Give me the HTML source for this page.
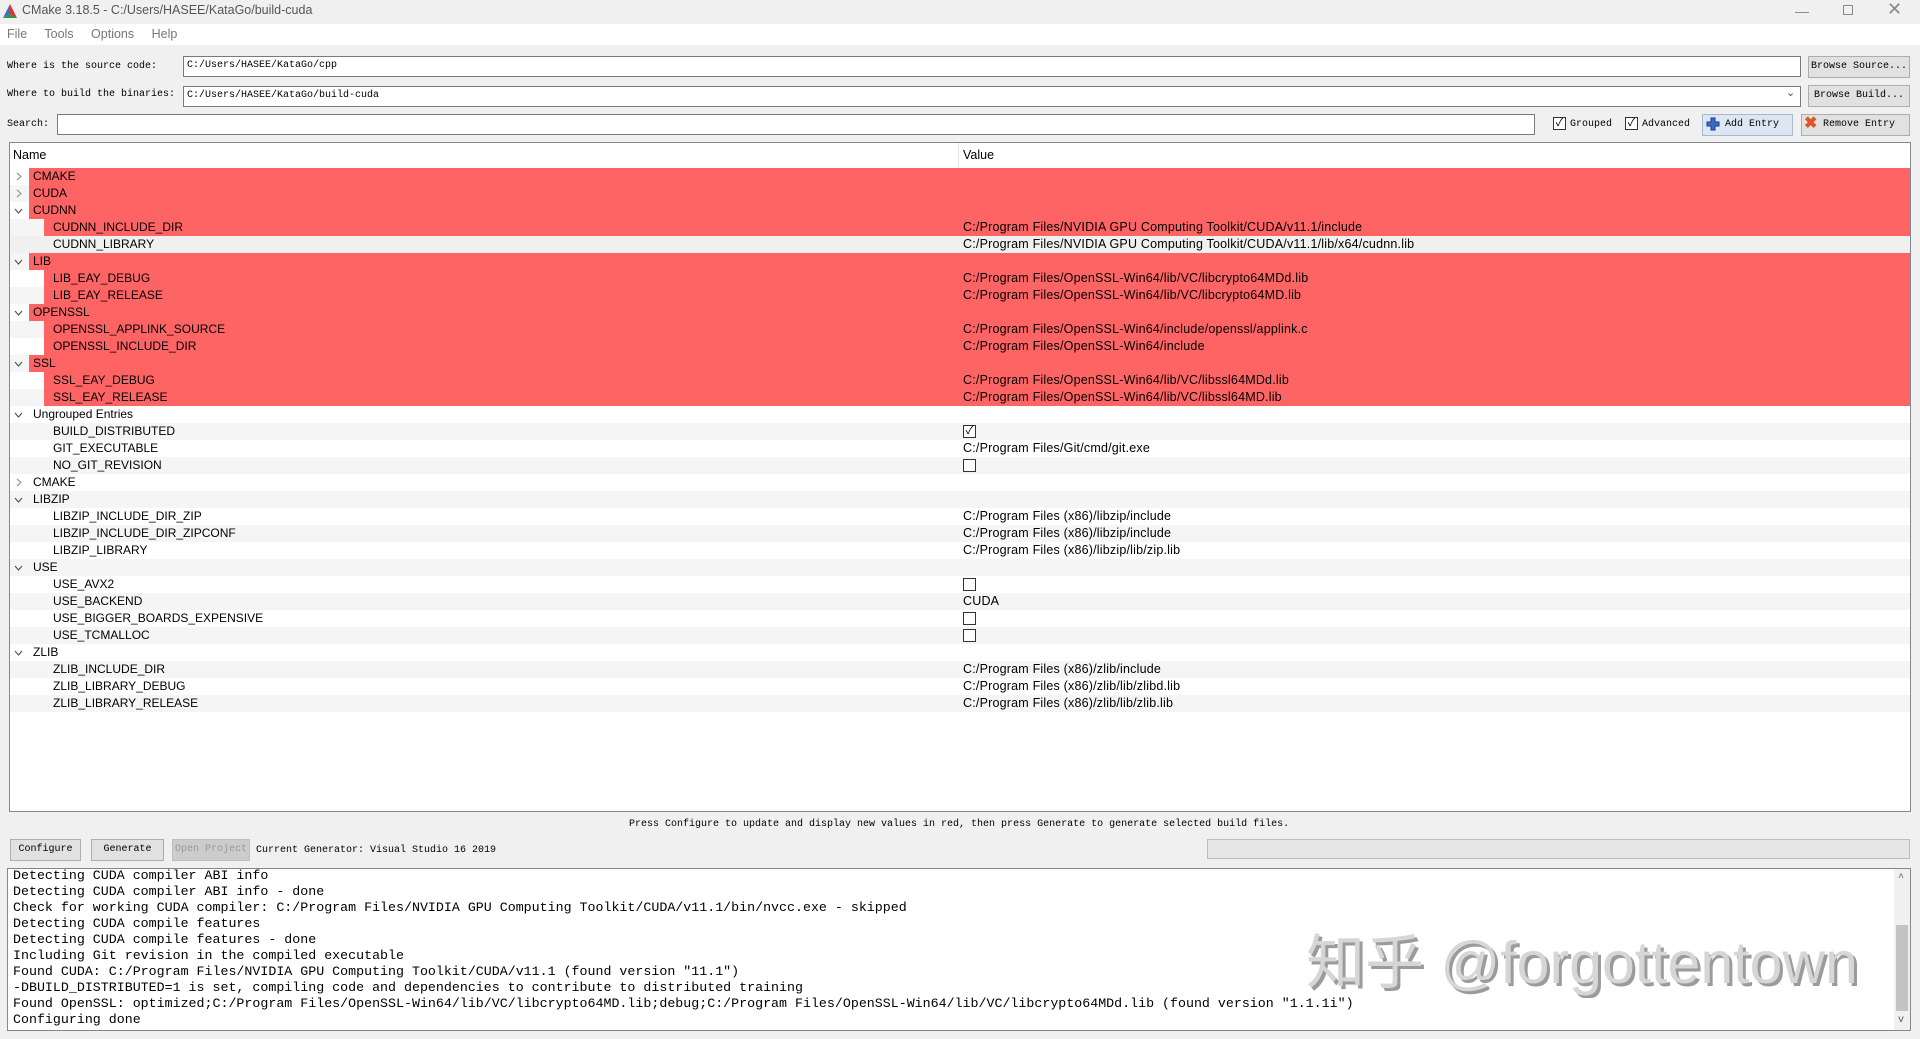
<!DOCTYPE html>
<html><head><meta charset="utf-8"><style>
*{margin:0;padding:0;box-sizing:border-box}
body{width:1920px;height:1039px;background:#f0f0f0;position:relative;overflow:hidden;font-family:"Liberation Sans","Noto Sans CJK SC",sans-serif;}
.a{position:absolute}
.mono{font-family:"Liberation Mono","Noto Sans CJK SC",monospace;font-size:10px;color:#000;white-space:pre}
.field{position:absolute;background:#fff;border:1px solid #7a7a7a;height:21px;padding:3px 3px;}
.btn{position:absolute;background:#e1e1e1;border:1px solid #adadad;height:22px;text-align:center;padding-top:4px}
.tbl{position:absolute;left:9px;top:142px;width:1902px;height:670px;background:#fff;border:1px solid #828790;overflow:hidden}
.r{position:absolute;left:0;width:1900px;height:17px;font-size:12.5px;line-height:17px;color:#000}
.g{background:#f5f5f5}
.red{position:absolute;top:0;bottom:0;right:0;background:#ff6464}
.t{left:19px}.c{left:34px}
.n{position:absolute;font-size:12px}
.v{position:absolute;left:953px;white-space:nowrap;letter-spacing:0.2px}
.ar{position:absolute;left:4px;top:4px;width:9px;height:9px}
.cb{position:absolute;left:953px;top:2px;width:13px;height:13px;border:1px solid #333;background:#fff}
.log{position:absolute;left:7px;top:868px;width:1904px;height:163px;background:#fff;border:1px solid #828790}
.log div{position:absolute;left:5px;font-family:"Liberation Mono",monospace;font-size:13.3px;line-height:16px;white-space:pre;color:#000}
</style></head><body>
<svg width="0" height="0" style="position:absolute"><defs>
<symbol id="rt" viewBox="0 0 9 9"><path d="M3 1l4 3.5-4 3.5" fill="none" stroke="#999" stroke-width="1.2"/></symbol>
<symbol id="dn" viewBox="0 0 9 9"><path d="M1 3l3.5 4 3.5-4" fill="none" stroke="#555" stroke-width="1.2"/></symbol>
</defs></svg>
<svg class="a" style="left:2px;top:3px" width="16" height="16" viewBox="0 0 16 16"><polygon points="8,1 1,15 8,11" fill="#3b6fc4"/><polygon points="8,1 15,15 8,11" fill="#d33"/><polygon points="1,15 15,15 8,11" fill="#2a9a3a"/></svg>
<div class="a" style="left:22px;top:3px;font-size:12.5px;color:#555">CMake 3.18.5 - C:/Users/HASEE/KataGo/build-cuda</div>
<div class="a" style="left:1795px;top:3px;font-size:14px;color:#888">—</div>
<div class="a" style="left:1843px;top:5px;width:10px;height:10px;border:1px solid #888"></div>
<div class="a" style="left:1887px;top:-1px;font-size:18px;color:#888">✕</div>
<div class="a" style="left:0;top:24px;width:1920px;height:21px;background:#fff"></div>
<div class="a" style="left:7px;top:27px;font-size:12.5px;color:#777;word-spacing:14px">File Tools Options Help</div>

<div class="a mono" style="left:7px;top:61px">Where is the source code:</div>
<div class="field mono" style="left:183px;top:56px;width:1618px">C:/Users/HASEE/KataGo/cpp</div>
<div class="btn mono" style="left:1808px;top:56px;width:102px">Browse Source...</div>
<div class="a mono" style="left:7px;top:89px">Where to build the binaries:</div>
<div class="field mono" style="left:183px;top:86px;width:1618px">C:/Users/HASEE/KataGo/build-cuda</div>
<div class="a" style="left:1786px;top:86px;font-size:11px;color:#555">⌄</div>
<div class="btn mono" style="left:1808px;top:85px;width:102px">Browse Build...</div>
<div class="a mono" style="left:7px;top:119px">Search:</div>
<div class="field" style="left:57px;top:114px;width:1478px"></div>
<div class="a" style="left:1553px;top:117px;width:13px;height:13px;border:1px solid #333;background:#fff;font-size:11px;line-height:11px;text-align:center">✓</div>
<div class="a mono" style="left:1570px;top:119px">Grouped</div>
<div class="a" style="left:1625px;top:117px;width:13px;height:13px;border:1px solid #333;background:#fff;font-size:11px;line-height:11px;text-align:center">✓</div>
<div class="a mono" style="left:1642px;top:119px">Advanced</div>
<div class="btn mono" style="left:1702px;top:114px;width:91px;background:#dde6f3;border-color:#a8b8d0;text-align:left;padding-left:22px">Add Entry</div>
<svg class="a" style="left:1706px;top:117px" width="14" height="14"><path d="M5 1h4v4h4v4h-4v4h-4v-4h-4v-4h4z" fill="#3a6cc8" stroke="#1a3c88"/></svg>
<div class="btn mono" style="left:1801px;top:114px;width:109px;text-align:left;padding-left:21px">Remove Entry</div>
<div class="a" style="left:1804px;top:113px;color:#e0542a;font-size:16px;font-weight:bold">✖</div>

<div class="tbl">
<div class="a" style="left:0;top:0;width:1900px;height:25px;background:#fff"></div>
<div class="a" style="left:3px;top:5px;font-size:12.5px">Name</div>
<div class="a" style="left:948px;top:0;width:1px;height:25px;background:#e5e5e5"></div>
<div class="a" style="left:953px;top:5px;font-size:12.5px">Value</div>

<div class="r" style="top:25px"><div class="red t"></div><svg class="ar"><use href="#rt"/></svg><span class="n" style="left:23px">CMAKE</span></div>
<div class="r g" style="top:42px"><div class="red t"></div><svg class="ar"><use href="#rt"/></svg><span class="n" style="left:23px">CUDA</span></div>
<div class="r" style="top:59px"><div class="red t"></div><svg class="ar"><use href="#dn"/></svg><span class="n" style="left:23px">CUDNN</span></div>
<div class="r g" style="top:76px"><div class="red c"></div><span class="n" style="left:43px">CUDNN_INCLUDE_DIR</span><span class="v">C:/Program Files/NVIDIA GPU Computing Toolkit/CUDA/v11.1/include</span></div>
<div class="r g" style="top:93px;background:#f0f0f0"><span class="n" style="left:43px">CUDNN_LIBRARY</span><span class="v">C:/Program Files/NVIDIA GPU Computing Toolkit/CUDA/v11.1/lib/x64/cudnn.lib</span></div>
<div class="r g" style="top:110px"><div class="red t"></div><svg class="ar"><use href="#dn"/></svg><span class="n" style="left:23px">LIB</span></div>
<div class="r" style="top:127px"><div class="red c"></div><span class="n" style="left:43px">LIB_EAY_DEBUG</span><span class="v">C:/Program Files/OpenSSL-Win64/lib/VC/libcrypto64MDd.lib</span></div>
<div class="r g" style="top:144px"><div class="red c"></div><span class="n" style="left:43px">LIB_EAY_RELEASE</span><span class="v">C:/Program Files/OpenSSL-Win64/lib/VC/libcrypto64MD.lib</span></div>
<div class="r" style="top:161px"><div class="red t"></div><svg class="ar"><use href="#dn"/></svg><span class="n" style="left:23px">OPENSSL</span></div>
<div class="r g" style="top:178px"><div class="red c"></div><span class="n" style="left:43px">OPENSSL_APPLINK_SOURCE</span><span class="v">C:/Program Files/OpenSSL-Win64/include/openssl/applink.c</span></div>
<div class="r" style="top:195px"><div class="red c"></div><span class="n" style="left:43px">OPENSSL_INCLUDE_DIR</span><span class="v">C:/Program Files/OpenSSL-Win64/include</span></div>
<div class="r g" style="top:212px"><div class="red t"></div><svg class="ar"><use href="#dn"/></svg><span class="n" style="left:23px">SSL</span></div>
<div class="r" style="top:229px"><div class="red c"></div><span class="n" style="left:43px">SSL_EAY_DEBUG</span><span class="v">C:/Program Files/OpenSSL-Win64/lib/VC/libssl64MDd.lib</span></div>
<div class="r g" style="top:246px"><div class="red c"></div><span class="n" style="left:43px">SSL_EAY_RELEASE</span><span class="v">C:/Program Files/OpenSSL-Win64/lib/VC/libssl64MD.lib</span></div>
<div class="r" style="top:263px"><svg class="ar"><use href="#dn"/></svg><span class="n" style="left:23px">Ungrouped Entries</span></div>
<div class="r g" style="top:280px"><span class="n" style="left:43px">BUILD_DISTRIBUTED</span><span class="cb" style="font-size:11px;line-height:11px;text-align:center">✓</span></div>
<div class="r" style="top:297px"><span class="n" style="left:43px">GIT_EXECUTABLE</span><span class="v">C:/Program Files/Git/cmd/git.exe</span></div>
<div class="r g" style="top:314px"><span class="n" style="left:43px">NO_GIT_REVISION</span><span class="cb"></span></div>
<div class="r" style="top:331px"><svg class="ar"><use href="#rt"/></svg><span class="n" style="left:23px">CMAKE</span></div>
<div class="r g" style="top:348px"><svg class="ar"><use href="#dn"/></svg><span class="n" style="left:23px">LIBZIP</span></div>
<div class="r" style="top:365px"><span class="n" style="left:43px">LIBZIP_INCLUDE_DIR_ZIP</span><span class="v">C:/Program Files (x86)/libzip/include</span></div>
<div class="r g" style="top:382px"><span class="n" style="left:43px">LIBZIP_INCLUDE_DIR_ZIPCONF</span><span class="v">C:/Program Files (x86)/libzip/include</span></div>
<div class="r" style="top:399px"><span class="n" style="left:43px">LIBZIP_LIBRARY</span><span class="v">C:/Program Files (x86)/libzip/lib/zip.lib</span></div>
<div class="r g" style="top:416px"><svg class="ar"><use href="#dn"/></svg><span class="n" style="left:23px">USE</span></div>
<div class="r" style="top:433px"><span class="n" style="left:43px">USE_AVX2</span><span class="cb"></span></div>
<div class="r g" style="top:450px"><span class="n" style="left:43px">USE_BACKEND</span><span class="v">CUDA</span></div>
<div class="r" style="top:467px"><span class="n" style="left:43px">USE_BIGGER_BOARDS_EXPENSIVE</span><span class="cb"></span></div>
<div class="r g" style="top:484px"><span class="n" style="left:43px">USE_TCMALLOC</span><span class="cb"></span></div>
<div class="r" style="top:501px"><svg class="ar"><use href="#dn"/></svg><span class="n" style="left:23px">ZLIB</span></div>
<div class="r g" style="top:518px"><span class="n" style="left:43px">ZLIB_INCLUDE_DIR</span><span class="v">C:/Program Files (x86)/zlib/include</span></div>
<div class="r" style="top:535px"><span class="n" style="left:43px">ZLIB_LIBRARY_DEBUG</span><span class="v">C:/Program Files (x86)/zlib/lib/zlibd.lib</span></div>
<div class="r g" style="top:552px"><span class="n" style="left:43px">ZLIB_LIBRARY_RELEASE</span><span class="v">C:/Program Files (x86)/zlib/lib/zlib.lib</span></div>
</div>

<div class="a mono" style="left:629px;top:819px">Press Configure to update and display new values in red, then press Generate to generate selected build files.</div>
<div class="btn mono" style="left:10px;top:839px;width:71px">Configure</div>
<div class="btn mono" style="left:91px;top:839px;width:73px">Generate</div>
<div class="btn mono" style="left:172px;top:839px;width:78px;background:#ccc;border-color:#bfbfbf;color:#999">Open Project</div>
<div class="a mono" style="left:256px;top:845px">Current Generator: Visual Studio 16 2019</div>
<div class="a" style="left:1207px;top:839px;width:703px;height:20px;background:#e6e6e6;border:1px solid #bcbcbc"></div>

<div class="log">
<div style="top:-1px">Detecting CUDA compiler ABI info</div>
<div style="top:15px">Detecting CUDA compiler ABI info - done</div>
<div style="top:31px">Check for working CUDA compiler: C:/Program Files/NVIDIA GPU Computing Toolkit/CUDA/v11.1/bin/nvcc.exe - skipped</div>
<div style="top:47px">Detecting CUDA compile features</div>
<div style="top:63px">Detecting CUDA compile features - done</div>
<div style="top:79px">Including Git revision in the compiled executable</div>
<div style="top:95px">Found CUDA: C:/Program Files/NVIDIA GPU Computing Toolkit/CUDA/v11.1 (found version "11.1")</div>
<div style="top:111px">-DBUILD_DISTRIBUTED=1 is set, compiling code and dependencies to contribute to distributed training</div>
<div style="top:127px">Found OpenSSL: optimized;C:/Program Files/OpenSSL-Win64/lib/VC/libcrypto64MD.lib;debug;C:/Program Files/OpenSSL-Win64/lib/VC/libcrypto64MDd.lib (found version "1.1.1i")</div>
<div style="top:143px">Configuring done</div>
<div style="left:1886px;top:0;width:16px;height:161px;background:#f0f0f0"></div>
<div style="left:1888px;top:56px;width:12px;height:86px;background:#c2c2c2"></div>
<div style="left:1890px;top:2px;color:#555;font-size:10px">^</div>
<div style="left:1890px;top:144px;color:#555;font-size:10px">v</div>
</div>
<div class="a" style="left:1306px;top:915px;font-size:59px;color:#cfcfcf;text-shadow:3px 3px 0 #8a8a8a;font-family:'Liberation Sans','Noto Sans CJK SC',sans-serif;white-space:nowrap;opacity:.85">知乎 @forgottentown</div>
</body></html>
